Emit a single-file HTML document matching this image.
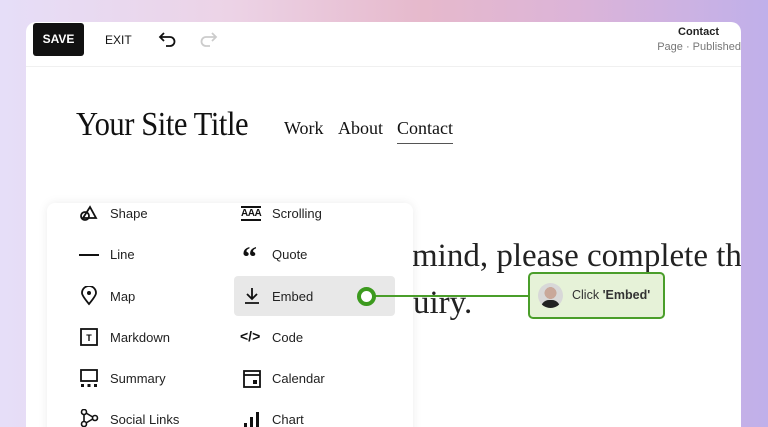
<!DOCTYPE html>
<html><head><style>
*{margin:0;padding:0;box-sizing:border-box}
html,body{width:768px;height:427px;overflow:hidden}
body{position:relative;font-family:"Liberation Sans",sans-serif;
background:linear-gradient(90deg,#e6def8 0%,#ecd3e6 30%,#e6b9cc 55%,#dcb4d8 75%,#c0b0ea 100%);}
.card{position:absolute;left:26px;top:22px;width:715px;height:405px;background:#fff;border-radius:10px 10px 0 0;overflow:hidden}
.hdr{position:absolute;left:0;top:0;width:100%;height:45px;border-bottom:1px solid #f0f0f0}
.save{position:absolute;left:7px;top:1px;width:51px;height:33px;background:#111;border-radius:3px;color:#fff;font-size:12px;font-weight:bold;text-align:center;line-height:33px}
.exit{position:absolute;left:79px;top:11px;font-size:12px;color:#111}
.serif{font-family:"Liberation Serif",serif;color:#111}
.panel{position:absolute;left:47px;top:203px;width:366px;height:240px;background:#fff;border-radius:8px;box-shadow:0 0 10px rgba(0,0,0,.08)}
.it{position:absolute;font-size:13px;color:#222}
.ic{position:absolute}
</style></head><body>
<div class="card">
 <div class="hdr">
  <div class="save">SAVE</div>
  <div class="exit">EXIT</div>
  <svg class="ic" style="left:132px;top:8px" width="20" height="18" viewBox="0 0 20 18"><path d="M6 3 L2 7 L6 11 M2 7 H12 A4.5 4.5 0 0 1 12 16 H8" fill="none" stroke="#111" stroke-width="1.8"/></svg>
  <svg class="ic" style="left:172px;top:8px" width="20" height="18" viewBox="0 0 20 18"><path d="M14 3 L18 7 L14 11 M18 7 H8 A4.5 4.5 0 0 0 8 16 H12" fill="none" stroke="#ccc" stroke-width="1.8"/></svg>
  <div style="position:absolute;right:22px;top:4px;font-size:11px;color:#222;font-weight:bold">Contact</div>
  <div style="position:absolute;right:0;top:19px;font-size:11px;color:#777">Page · Published</div>
 </div>
 <div class="serif" style="position:absolute;left:50px;top:84px;font-size:34px;letter-spacing:-0.5px;transform:scaleX(.9);transform-origin:left;white-space:nowrap">Your Site Title</div>
 <div class="serif" style="position:absolute;left:258px;top:96px;font-size:18px">Work</div>
 <div class="serif" style="position:absolute;left:312px;top:96px;font-size:18px">About</div>
 <div class="serif" style="position:absolute;left:371px;top:96px;font-size:18px;border-bottom:1.5px solid #555;padding-bottom:4px">Contact</div>
 <div class="serif" style="position:absolute;left:386px;top:216px;font-size:33px;white-space:nowrap;color:#222">mind, please complete th</div>
 <div class="serif" style="position:absolute;left:387px;top:263px;font-size:33px;color:#222">uiry.</div>
</div>
<div class="panel"></div>
<div style="position:absolute;left:234px;top:276px;width:161px;height:40px;background:#e8e8e8;border-radius:4px"></div>
<!-- col1 -->
<svg class="ic" style="left:79px;top:204px" width="20" height="18" viewBox="0 0 20 18"><circle cx="6" cy="12" r="4" fill="none" stroke="#111" stroke-width="1.8"/><path d="M4 14 L11 3 L17 14 Z" fill="none" stroke="#111" stroke-width="1.8"/></svg>
<div class="it" style="left:110px;top:206px">Shape</div>
<div style="position:absolute;left:79px;top:254px;width:20px;height:2px;background:#111"></div>
<div class="it" style="left:110px;top:247px">Line</div>
<svg class="ic" style="left:80px;top:286px" width="18" height="20" viewBox="0 0 18 20"><path d="M9 18 C4 12 2 9 2 7 A7 7 0 0 1 16 7 C16 9 14 12 9 18 Z" fill="none" stroke="#111" stroke-width="1.8"/><circle cx="9" cy="7" r="2" fill="#111"/></svg>
<div class="it" style="left:110px;top:289px">Map</div>
<svg class="ic" style="left:80px;top:328px" width="18" height="18" viewBox="0 0 18 18"><rect x="1" y="1" width="16" height="16" fill="none" stroke="#111" stroke-width="1.8"/><text x="9" y="13" font-size="9" font-weight="bold" text-anchor="middle" font-family="Liberation Sans">T</text></svg>
<div class="it" style="left:110px;top:330px">Markdown</div>
<svg class="ic" style="left:80px;top:369px" width="18" height="18" viewBox="0 0 18 18"><rect x="1" y="1" width="16" height="11" fill="none" stroke="#111" stroke-width="1.8"/><rect x="1" y="15" width="3" height="3" fill="#111"/><rect x="7.5" y="15" width="3" height="3" fill="#111"/><rect x="14" y="15" width="3" height="3" fill="#111"/></svg>
<div class="it" style="left:110px;top:371px">Summary</div>
<svg class="ic" style="left:80px;top:409px" width="20" height="18" viewBox="0 0 20 18"><circle cx="4" cy="3" r="2.5" fill="none" stroke="#111" stroke-width="1.6"/><circle cx="15" cy="9" r="2.5" fill="none" stroke="#111" stroke-width="1.6"/><circle cx="4" cy="15" r="2.5" fill="none" stroke="#111" stroke-width="1.6"/><path d="M4 5.5 V12.5 M6 4 L12.7 8 M6 14 L12.7 10" stroke="#111" stroke-width="1.6"/></svg>
<div class="it" style="left:110px;top:412px">Social Links</div>
<!-- col2 -->
<div style="position:absolute;left:241px;top:206px;font-size:10px;font-weight:bold;color:#111;border-top:2px solid #111;border-bottom:2px solid #111;line-height:11px;letter-spacing:-0.5px">AAA</div>
<div class="it" style="left:272px;top:206px">Scrolling</div>
<div style="position:absolute;left:242px;top:243px;font-family:'Liberation Serif',serif;font-size:30px;font-weight:bold;color:#111;line-height:30px">“</div>
<div class="it" style="left:272px;top:247px">Quote</div>
<svg class="ic" style="left:243px;top:287px" width="18" height="18" viewBox="0 0 18 18"><path d="M9 1 V12 M4 7 L9 12 L14 7 M2 16 H16" fill="none" stroke="#111" stroke-width="1.8"/></svg>
<div class="it" style="left:272px;top:289px">Embed</div>
<div style="position:absolute;left:240px;top:328px;font-size:14px;font-weight:bold;color:#111">&lt;/&gt;</div>
<div class="it" style="left:272px;top:330px">Code</div>
<svg class="ic" style="left:243px;top:370px" width="18" height="18" viewBox="0 0 18 18"><rect x="1" y="1" width="16" height="16" fill="none" stroke="#111" stroke-width="1.8"/><path d="M1 5 H17" stroke="#111" stroke-width="1.8"/><rect x="10" y="10" width="4" height="4" fill="#111"/></svg>
<div class="it" style="left:272px;top:371px">Calendar</div>
<svg class="ic" style="left:243px;top:410px" width="18" height="18" viewBox="0 0 18 18"><rect x="1" y="13" width="3" height="4" fill="#111"/><rect x="7" y="7" width="3" height="10" fill="#111"/><rect x="13" y="2" width="3" height="15" fill="#111"/></svg>
<div class="it" style="left:272px;top:412px">Chart</div>
<!-- pointer -->
<div style="position:absolute;left:374px;top:295px;width:155px;height:2px;background:#4a9e2a"></div>
<div style="position:absolute;left:357px;top:287px;width:19px;height:19px;border-radius:50%;border:4px solid #3c9a1e;background:#fff"></div>
<div style="position:absolute;left:528px;top:272px;width:137px;height:47px;background:#e6f2d8;border:2px solid #4a9e2a;border-radius:5px"></div>
<div style="position:absolute;left:538px;top:283px;width:25px;height:25px;border-radius:50%;background:radial-gradient(circle at 50% 40%,#c9a89a 0 30%,#d8d8d8 31%);overflow:hidden"><div style="position:absolute;left:3px;top:17px;width:19px;height:10px;background:#222;border-radius:8px 8px 0 0"></div></div>
<div style="position:absolute;left:572px;top:288px;font-size:12.5px;color:#333">Click <b>'Embed'</b></div>
</body></html>
